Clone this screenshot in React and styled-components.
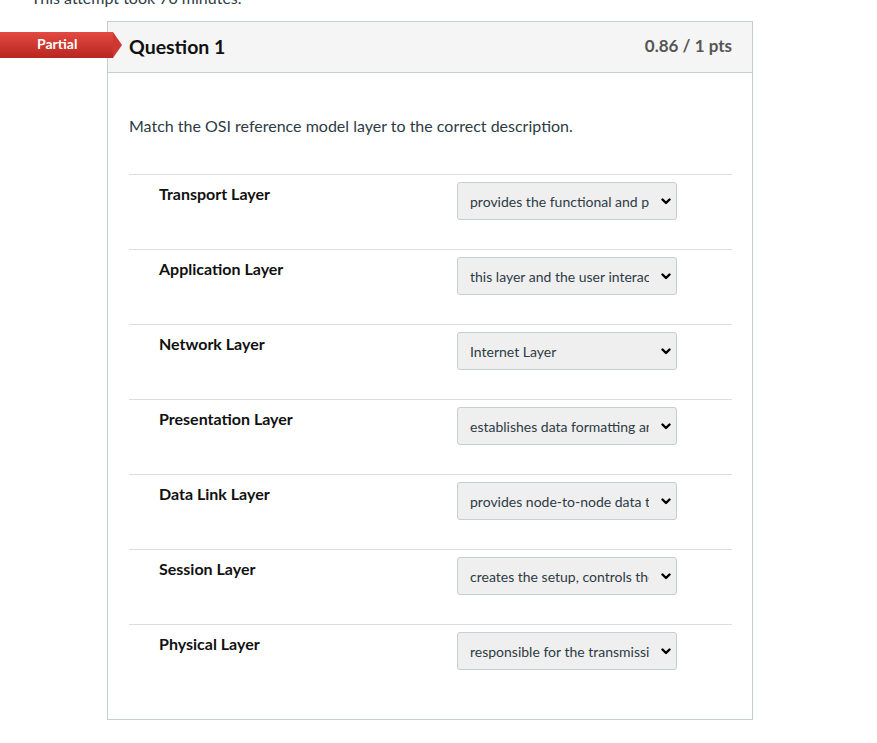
import React from 'react';
import styled, { createGlobalStyle } from 'styled-components';

const GlobalStyle = createGlobalStyle`
  body {
    margin: 0;
    background: #fff;
    font-family: Lato, "Noto Sans", "Liberation Sans", sans-serif;
    color: #2d3b45;
  }
`;

const Page = styled.div`
  width: 877px;
  height: 743px;
  overflow: hidden;
  position: relative;
`;

const AttemptNote = styled.div`
  margin: -14px 0 14px 31px;
  height: 21px;
  font-size: 16px;
  line-height: 24px;
  color: #2d3b45;
`;

const Banner = styled.div`
  position: absolute;
  left: 0;
  top: 32px;
  width: 113px;
  height: 26px;
  background: linear-gradient(#e24a43, #b8261f);
  color: #fff;
  font-weight: 700;
  font-size: 14px;
  line-height: 24px;
  padding-left: 37px;
  box-sizing: border-box;

  &::after {
    content: '';
    position: absolute;
    right: -9px;
    top: 0;
    border-top: 13px solid transparent;
    border-bottom: 13px solid transparent;
    border-left: 9px solid #cd3832;
  }
`;

const Card = styled.div`
  margin-left: 107px;
  width: 646px;
  box-sizing: border-box;
  border: 1px solid #c7cdd1;
`;

const Header = styled.div`
  display: flex;
  align-items: center;
  justify-content: space-between;
  height: 51px;
  padding: 0 20px 2px 21px;
  box-sizing: border-box;
  background: #f5f5f5;
  border-bottom: 1px solid #c7cdd1;
`;

const Title = styled.h2`
  margin: 0;
  font-size: 19.5px;
  font-weight: 700;
  color: #111;
`;

const Points = styled.span`
  font-size: 17px;
  font-weight: 700;
  color: #555;
  padding-bottom: 2px;
`;

const Body = styled.div`
  padding: 41px 20px 20px 21px;
`;

const Prompt = styled.p`
  margin: 0 0 36px;
  font-size: 16px;
  line-height: 24px;
  color: #2d3b45;
`;

const Row = styled.div`
  display: grid;
  grid-template-columns: 298px 220px;
  height: 75px;
  box-sizing: border-box;
  padding: 7px 0 0 30px;
  border-top: 1px solid #ddd;
`;

const Label = styled.div`
  font-size: 16px;
  font-weight: 700;
  line-height: 24px;
  color: #111;
`;

const Select = styled.select`
  appearance: none;
  width: 220px;
  height: 38px;
  box-sizing: border-box;
  padding: 0 27px 0 12px;
  font-family: Lato, "Noto Sans", "Liberation Sans", sans-serif;
  font-size: 14px;
  color: #2d3b45;
  background-color: #efefef;
  background-image: url("data:image/svg+xml,%3Csvg xmlns='http://www.w3.org/2000/svg' width='10' height='7' viewBox='0 0 10 7'%3E%3Cpath d='M1.5 1.5 5 5l3.5-3.5' fill='none' stroke='%23000' stroke-width='2.4' stroke-linecap='round' stroke-linejoin='round'/%3E%3C/svg%3E");
  background-repeat: no-repeat;
  background-position: right 5px center;
  background-size: 10px 7px;
  border: 1px solid #c7cdd1;
  border-radius: 3px;
  outline: none;
`;

const rows = [
  ['Transport Layer', 'provides the functional and procedural means of transferring data'],
  ['Application Layer', 'this layer and the user interact directly with the software application'],
  ['Network Layer', 'Internet Layer'],
  ['Presentation Layer', 'establishes data formatting and translation'],
  ['Data Link Layer', 'provides node-to-node data transfer'],
  ['Session Layer', 'creates the setup, controls the connections'],
  ['Physical Layer', 'responsible for the transmission of raw bits'],
];

const App = () => {
  return (
    <Page>
      <GlobalStyle />
      <AttemptNote>This attempt took 70 minutes.</AttemptNote>
      <Banner>Partial</Banner>
      <Card>
        <Header>
          <Title>Question 1</Title>
          <Points>0.86 / 1 pts</Points>
        </Header>
        <Body>
          <Prompt>Match the OSI reference model layer to the correct description.</Prompt>
          {rows.map(([label, answer]) => (
            <Row key={label}>
              <Label>{label}</Label>
              <Select defaultValue={answer}>
                <option value={answer}>{answer}</option>
              </Select>
            </Row>
          ))}
        </Body>
      </Card>
    </Page>
  );
};

export default App;
